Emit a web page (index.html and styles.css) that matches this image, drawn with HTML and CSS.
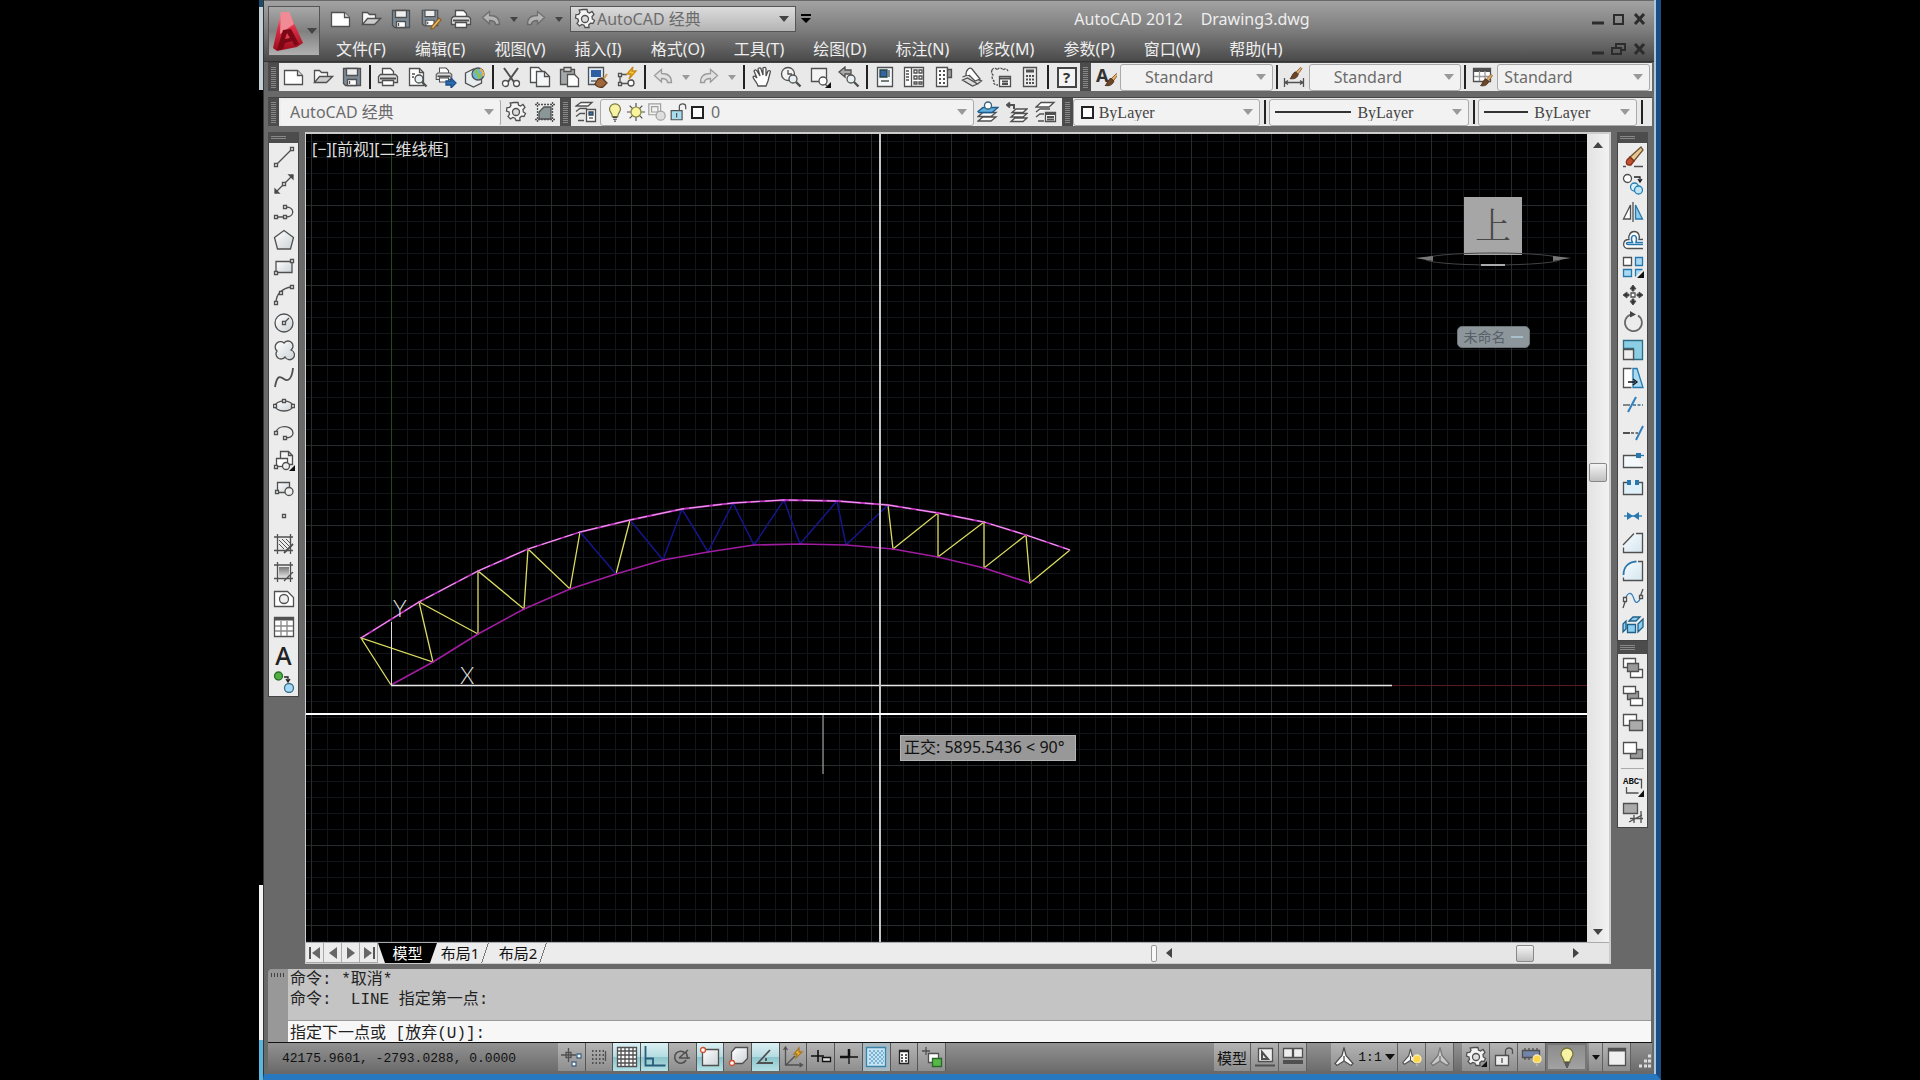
FILE: index.html
```html
<!DOCTYPE html>
<html lang="zh-CN">
<head>
<meta charset="utf-8" />
<title>AutoCAD 2012 Drawing3.dwg</title>
<link rel="stylesheet" href="styles.css">
</head>

<body>
<!-- shared icons -->
<svg class="sprite" width="0" height="0">
	<defs>
		<linearGradient id="gRed" x1="0" y1="0" x2="0" y2="1"><stop offset="0" stop-color="#f4a0a8"/><stop offset=".4" stop-color="#dd3048"/><stop offset="1" stop-color="#9c0c1c"/></linearGradient>
		<linearGradient id="gGray" x1="0" y1="0" x2="0" y2="1"><stop offset="0" stop-color="#777"/><stop offset="1" stop-color="#ddd"/></linearGradient>
		<linearGradient id="gBlue" x1="0" y1="0" x2="1" y2="1"><stop offset="0" stop-color="#f8fbfd"/><stop offset="1" stop-color="#d4e6f0"/></linearGradient>
		<linearGradient id="gLight" x1="0" y1="0" x2="1" y2="1"><stop offset="0" stop-color="#fff"/><stop offset="1" stop-color="#ccd2d6"/></linearGradient>
	</defs>
	<symbol id="new" viewBox="0 0 22 22"><path d="M1.500 4.500h13l5 5v9h-18z" fill="#fff"/><path d="M14.500 4.500v5h5" fill="#ddd"/></symbol>
	<symbol id="open" viewBox="0 0 22 22"><path d="M2.500 16.500v-12h5l2 2h6v4" fill="#f8f8f8"/><path d="M2.500 16.500l5-6h13l-6 6z" fill="#ccc"/></symbol>
	<symbol id="save" viewBox="0 0 22 22"><path d="M2.500 2.500h17v17h-15l-2-2z" fill="#7d8b98"/><path d="M5.500 2.500h11v7h-11z" fill="#eee"/><path d="M6.500 13.500h9v6h-9z" fill="#fff"/><path d="M8.500 15v3"/></symbol>
	<symbol id="print" viewBox="0 0 22 22"><path d="M5.500 8v-5.500h8l3 3v3" fill="#fff"/><path d="M3.500 8.500h15l2 2v6h-19v-6z" fill="#e0e0e0"/><path d="M3 12.500h16" stroke-width="2"/><path d="M5.500 14.500h11v5h-11z" fill="#fff"/></symbol>
	<symbol id="undo" viewBox="0 0 22 22"><path d="M2.500 9.500l7-6v4c7 0 10 3 10 9h-4c0-3-2-4-6-4v3.500z" fill="#ddd"/></symbol>
	<symbol id="redo" viewBox="0 0 22 22"><path d="M19.500 9.500l-7-6v4c-7 0-10 3-10 9h4c0-3 2-4 6-4v3.500z" fill="#ddd"/></symbol>
	<symbol id="gear" viewBox="0 0 22 22"><path d="M9 1.500h4l.5 2.500 2 1 2.500-1.500 2 3-2 2 .3 2.500 2.200 1.500-1.500 3-2.500-.3-1.700 1.600.2 2.700h-4l-1-2.300-2.200-.7-2.300 1.500-2.500-2.500 1.500-2.200-.5-2.300-2.500-1 .5-3.500 2.700-.2 1.300-2-.8-2.300z" fill="#f4f4f4"/><circle cx="11" cy="11" r="3.500" fill="#ddd"/></symbol>
	<symbol id="bulb" viewBox="0 0 22 22"><path d="M11 2a6 6 0 0 0-6 6c0 3 3 4 3 8h6c0-4 3-5 3-8a6 6 0 0 0-6-6z" fill="#f6f4a4" stroke="#77743a"/><path d="M8.500 17h5M9 19h4M10 21h2" stroke="#444"/></symbol>
	<symbol id="brush" viewBox="0 0 22 22"><path d="M18.500 2l2 2-6 8-3-3z" fill="#e0b070" stroke="#8a6030"/><path d="M11 8.500l4 4c-2 6-7 7-12 6 3-2 3-8 8-10z" fill="#6b4526" stroke="#4a2e18"/></symbol>
	<symbol id="lens" viewBox="0 0 22 22"><circle cx="13" cy="13" r="4" fill="#e8f0f4"/><path d="M16 16l4.500 4.500" stroke-width="2.400"/></symbol>
	<symbol id="unlock" viewBox="0 0 22 22"><path d="M12.500 9v-4c0-4 7-4 7 0v3"/><path d="M3.500 9.500h12v10h-12z" fill="#a8dcee"/><path d="M9.500 12v5"/></symbol>
	<symbol id="unlockw" viewBox="0 0 22 22"><path d="M12.500 9v-4c0-4 7-4 7 0v3"/><path d="M2.500 9.500h13v10h-13z" fill="#eee"/><path d="M9 12v5"/></symbol>
	<symbol id="scale" viewBox="0 0 22 22"><path d="M11 1.500l2 8 7 8-2 2-7-4.500-7 4.500-2-2 7-8z" fill="#f8f8f8"/><path d="M11 10v5" /></symbol>
	<symbol id="spark" viewBox="0 0 22 22"><circle cx="16" cy="13" r="4" fill="#ffd54a" stroke="#f4ecb0"/><path d="M14.500 18h3v2h-3z" fill="#fff" stroke="#999"/></symbol>
</svg>

<div class="desktop">
<div class="behind"></div>
<div class="window">

	<header class="titlebar">
		<button class="app" aria-label="应用程序菜单">
			<svg width="34" height="42" viewBox="0 0 34 42"><path d="M10 2h8l14 31-6 4-20 4-4-3z" fill="url(#gRed)"/><path d="M10 2h8l5 12-14 10z" fill="#f08a94"/><path d="M12 20l8-1 8 15-4 2-3-5-7 2-2 6-6 1z" fill="#7c0815"/><path d="M16 23l3 5-5 1z" fill="#e04050"/></svg>
			<i class="arr"></i>
		</button>
		<div class="titlerows">
			<div class="row1">
				<div class="qat">
					<button aria-label="新建"><svg class="ic"><use href="#new"/></svg></button>
					<button aria-label="打开"><svg class="ic"><use href="#open"/></svg></button>
					<button aria-label="保存"><svg class="ic"><use href="#save"/></svg></button>
					<button aria-label="另存为"><svg class="ic" viewBox="0 0 22 22"><use href="#save" width="20" height="20"/><path d="M19 10l2 2-7 8-3 1 1-3z" fill="#f0c060" stroke="#8a6030"/></svg></button>
					<button aria-label="打印"><svg class="ic"><use href="#print"/></svg></button>
					<button aria-label="放弃" class="dim"><svg class="ic"><use href="#undo"/></svg></button>
					<button aria-label="放弃列表" class="narrow"><i class="arr sm"></i></button>
					<button aria-label="重做" class="dim"><svg class="ic"><use href="#redo"/></svg></button>
					<button aria-label="重做列表" class="narrow"><i class="arr sm"></i></button>
				</div>
				<div class="combo space">
					<svg class="ic"><use href="#gear"/></svg>
					<select aria-label="工作空间"><option>AutoCAD 经典</option></select>
					<i class="arr"></i>
				</div>
				<button class="more" aria-label="自定义"><svg width="12" height="10"><path d="M1 0h10v2h-10zM1 4h10l-5 5z"/></svg></button>
				<h1><span>AutoCAD 2012</span><span>Drawing3.dwg</span></h1>
				<div class="winbtns">
					<button aria-label="最小化"><svg width="14" height="14"><path d="M1 11h12" stroke-width="3"/></svg></button>
					<button aria-label="最大化"><svg width="14" height="14"><path d="M2 3h9v9h-9z" stroke-width="2"/></svg></button>
					<button aria-label="关闭"><svg width="14" height="14"><path d="M2 2l9 10M11 2l-9 10" stroke-width="3"/></svg></button>
				</div>
			</div>
			<div class="row2">
				<nav class="menu">
					<a href="#">文件(F)</a>
					<a href="#">编辑(E)</a>
					<a href="#">视图(V)</a>
					<a href="#">插入(I)</a>
					<a href="#">格式(O)</a>
					<a href="#">工具(T)</a>
					<a href="#">绘图(D)</a>
					<a href="#">标注(N)</a>
					<a href="#">修改(M)</a>
					<a href="#">参数(P)</a>
					<a href="#">窗口(W)</a>
					<a href="#">帮助(H)</a>
				</nav>
				<div class="winbtns">
					<button aria-label="最小化图形"><svg width="14" height="14"><path d="M1 11h12" stroke-width="3"/></svg></button>
					<button aria-label="还原图形"><svg width="16" height="14"><path d="M1 6h9v6h-9zM5 6v-4h9v6h-4" stroke-width="2"/></svg></button>
					<button aria-label="关闭图形"><svg width="14" height="14"><path d="M2 2l9 10M11 2l-9 10" stroke-width="3"/></svg></button>
				</div>
			</div>
		</div>
	</header>

	<!-- standard toolbar + styles -->
	<div class="bar">
		<div class="grip"></div>
		<div class="tools">
			<button aria-label="新建"><svg class="ic"><use href="#new"/></svg></button>
			<button aria-label="打开"><svg class="ic"><use href="#open"/></svg></button>
			<button aria-label="保存"><svg class="ic"><use href="#save"/></svg></button>
			<i class="sep"></i>
			<button aria-label="打印"><svg class="ic"><use href="#print"/></svg></button>
			<button aria-label="打印预览"><svg class="ic" viewBox="0 0 22 22"><path d="M3.500 2.500h10l4 4v13h-14z" fill="#fff"/><path d="M13.500 2.500v4h4M6 8h3M6 11h2"/><use href="#lens" width="22" height="22"/></svg></button>
			<button aria-label="发布"><svg class="ic" viewBox="0 0 22 22"><use href="#print" width="18" height="18"/><path d="M11 15h5v-3l5 5-5 5v-3h-5z" fill="#2b6cb0" stroke="#1c4f88"/></svg></button>
			<button aria-label="三维DWF"><svg class="ic" viewBox="0 0 22 22"><path d="M1.500 7l8-4 8 4v10l-8 4-8-4z" fill="#e8edf0"/><circle cx="14" cy="8" r="6" fill="#6fb5e0"/><path d="M12 3c3 1 1 4 4 5s1 4-1 5c-3-2-1-4-3-5s-2-3 0-5z" fill="#8bc34a" stroke="none"/><path d="M16 3c3 2 4 4 3 7" stroke="#f0b040" stroke-width="2"/></svg></button>
			<i class="sep"></i>
			<button aria-label="剪切"><svg class="ic" viewBox="0 0 22 22"><path d="M4 2l10 14M18 2l-10 14" stroke-width="2"/><circle cx="5.500" cy="17.500" r="3" fill="#fff"/><circle cx="16.500" cy="17.500" r="3" fill="#fff"/></svg></button>
			<button aria-label="复制"><svg class="ic" viewBox="0 0 22 22"><path d="M1.500 1.500h8l4 4v11h-12z" fill="#fff"/><path d="M7.500 5.500h8l5 5v10h-13z" fill="#f4f6f8"/><path d="M15.500 5.500v5h5"/></svg></button>
			<button aria-label="粘贴"><svg class="ic" viewBox="0 0 22 22"><path d="M2.500 3.500h14v15h-14z" fill="#a4a8aa"/><path d="M6 1.500h7v4h-7z" fill="#ddd"/><path d="M9.500 8.500h7l4 4v8h-11z" fill="#fff"/></svg></button>
			<button aria-label="特性匹配"><svg class="ic" viewBox="0 0 22 22"><path d="M1.500 1.500h15v17h-15z" fill="#dfe9f2"/><path d="M4 4h10v7h-10z" fill="#2e5fa0" stroke="none"/><path d="M4 15h5"/><path d="M20 8l-4 6" stroke="#d0a050" stroke-width="2"/><path d="M11 13l4-1 5 5-4 4c-4 1-7-1-8-3z" fill="#a0683a" stroke="#5a3820"/></svg></button>
			<button aria-label="块编辑器"><svg class="ic" viewBox="0 0 22 22"><path d="M11 8.500h-7v9h12v-4"/><path d="M2.500 7.500h3v3h-3zM2.500 16.500h3v3h-3z" fill="#fff"/><circle cx="15" cy="17" r="3" fill="#fff"/><path d="M17 1l-6 7h4l-2 5 7-8h-4z" fill="#ffc52e" stroke="#c88a18"/></svg></button>
			<i class="sep"></i>
			<button aria-label="放弃" class="dim"><svg class="ic"><use href="#undo"/></svg></button>
			<button aria-label="放弃列表" class="narrow"><i class="arr sm pale"></i></button>
			<button aria-label="重做" class="dim"><svg class="ic"><use href="#redo"/></svg></button>
			<button aria-label="重做列表" class="narrow"><i class="arr sm pale"></i></button>
			<i class="sep"></i>
			<button aria-label="实时平移"><svg class="ic" viewBox="0 0 22 22"><path d="M7 20c-1-4-5-7-5-9 1-2 3 0 4 1l-3-7c1-2 2-1 3 0l3 5-2-7c1-2 3-1 3 0l2 6v-7c1-1 3-1 3 1v7l2-5c2-1 3 0 2 2l-2 8-2 5z" fill="#fff"/></svg></button>
			<button aria-label="实时缩放"><svg class="ic" viewBox="0 0 22 22"><circle cx="8" cy="8" r="6.500" fill="#f4f4f4"/><path d="M8 4v4h4"/><use href="#lens" width="22" height="22"/></svg></button>
			<button aria-label="窗口缩放"><svg class="ic" viewBox="0 0 22 22"><path d="M2.500 2.500h15v13h-15z" fill="#f4f4f4"/><circle cx="14" cy="15" r="4" fill="#fff"/><path d="M16 18l2 2"/><path d="M22 16v6h-6z" fill="#111" stroke="none"/></svg></button>
			<button aria-label="缩放上一个"><svg class="ic" viewBox="0 0 22 22"><path d="M1 6l6-5v3h6v4h-6v3z" fill="#aaa"/><use href="#lens" width="22" height="22"/></svg></button>
			<i class="sep"></i>
			<button aria-label="特性"><svg class="ic" viewBox="0 0 22 22"><path d="M3.500 1.500h15v19h-15z" fill="#f4f8fb"/><path d="M6 4h7v7h-7z" fill="#3565a0" stroke="#244"/><path d="M15 4v7M7 15h8" /></svg></button>
			<button aria-label="设计中心"><svg class="ic" viewBox="0 0 22 22"><path d="M1.500 1.500h19v19h-19zM8.500 2v18" fill="#fff"/><path d="M3 5h3M3 8h3M3 11h3M3 14h3M11 4h3v3h-3zM16 4h3v3h-3zM11 10h3v3h-3zM16 10h3v3h-3zM11 16h3v2h-3zM16 16h3v2h-3z"/></svg></button>
			<button aria-label="工具选项板"><svg class="ic" viewBox="0 0 22 22"><path d="M4.500 1.500h11v19h-11z" fill="#fff"/><path d="M15.500 3.500h4v8h-4z" fill="#999"/><path d="M7 5h2M11 5h2M7 9h2M11 9h2M7 13h2M11 13h2M7 17h2M11 17h2" stroke-width="2"/></svg></button>
			<button aria-label="图纸集"><svg class="ic" viewBox="0 0 22 22"><path d="M1.500 14l5-2 10 6-5 2zM1.500 11l5-2 14 6-4 3" fill="#ddd"/><path d="M5 9c0-6 4-8 6-6l8 10-5 2-6-6" fill="#fff"/></svg></button>
			<button aria-label="标记集"><svg class="ic" viewBox="0 0 22 22"><path d="M2 4c2-3 4-2 5 0 2-3 5-2 6 0 2-2 5-1 5 2M2 4c-1 3 0 4 1 5-2 3 0 5 1 6-1 3 1 4 4 4" stroke-dasharray="2.500 1"/><path d="M9.500 10.500h11v10h-11z" fill="#fff"/><path d="M10 12.500h10M12 15.500h6M12 18h6" stroke-width="2"/></svg></button>
			<button aria-label="计算器"><svg class="ic" viewBox="0 0 22 22"><path d="M4.500 1.500h13v19h-13z" fill="#eee"/><path d="M7 5h8" stroke-width="3"/><path d="M7 10h2M10 10h2M13 10h2M7 13.500h2M10 13.500h2M13 13.500h2M7 17h2M10 17h2M13 17h2" stroke-width="2"/></svg></button>
			<i class="sep"></i>
			<button aria-label="帮助" class="help"><span>?</span></button>
		</div>
		<div class="grip"></div>
		<div class="tools fill">
			<button aria-label="文字样式"><svg class="ic" viewBox="0 0 22 22"><text x="1" y="16" class="ta">A</text><use href="#brush" x="8" y="6" width="16" height="16"/></svg></button>
			<div class="combo"><select class="mid" aria-label="文字样式"><option>Standard</option></select><i class="arr pale"></i></div>
			<i class="sep"></i>
			<button aria-label="标注样式"><svg class="ic" viewBox="0 0 22 22"><path d="M1.500 12v9M20.500 12v9M2 16.500h18M5 14.500l-3 2 3 2M17 14.500l3 2-3 2"/><use href="#brush" x="4" y="0" width="17" height="15"/></svg></button>
			<div class="combo"><select class="mid" aria-label="标注样式"><option>Standard</option></select><i class="arr pale"></i></div>
			<i class="sep"></i>
			<button aria-label="表格样式"><svg class="ic" viewBox="0 0 22 22"><path d="M1.500 2.500h17v13h-17z" fill="#fff"/><path d="M2 4.500h16" stroke-width="3"/><path d="M2 10.500h16M7.500 5v10M13 5v10" stroke="#999"/><use href="#brush" x="6" y="7" width="16" height="15"/></svg></button>
			<div class="combo"><select aria-label="表格样式"><option>Standard</option></select><i class="arr pale"></i></div>
		</div>
	</div>

	<!-- workspace, layers, properties -->
	<div class="bar second">
		<div class="grip"></div>
		<div class="tools">
			<div class="combo ws"><select aria-label="工作空间"><option>AutoCAD 经典</option></select><i class="arr pale"></i></div>
			<button aria-label="工作空间设置"><svg class="ic"><use href="#gear"/></svg></button>
			<button aria-label="我的工作空间"><svg class="ic" viewBox="0 0 22 22"><path d="M1 3.500h20M1 18.500h20M3.500 1v20M18.500 1v20" stroke-dasharray="2 1"/><path d="M5 11l5-5h7v12h-12z" fill="#8b9696"/></svg></button>
		</div>
		<div class="grip"></div>
		<div class="tools layers">
			<button aria-label="图层特性"><svg class="ic" viewBox="0 0 22 22"><path d="M1 5l5-3.500h11l-4 3.500zM1 10.500l4-3h7M1 15.500l4-3h5M3 19.500h6" fill="#fff"/><path d="M11.500 8.500h9v12h-9z" fill="#fff"/><path d="M14 11h4v3h-4z" fill="#3a78b8" stroke="#345"/><path d="M14 17h4"/></svg></button>
			<div class="combo grow">
				<svg class="ic s18"><use href="#bulb"/></svg>
				<svg class="ic s18" viewBox="0 0 22 22"><path d="M11 1v20M1 11h20M4 4l14 14M18 4l-14 14"/><circle cx="11" cy="11" r="5.500" fill="#f8f4a0" stroke="#88843a"/></svg>
				<svg class="ic s18 faint" viewBox="0 0 22 22"><path d="M2 2h13v12h-13zM5 5h7v6h-7z"/><circle cx="15" cy="15" r="5" fill="#ccc"/></svg>
				<svg class="ic s18"><use href="#unlock"/></svg>
				<i class="swatch"></i>
				<select aria-label="图层"><option>0</option></select><i class="arr pale"></i>
			</div>
			<button aria-label="置为当前图层"><svg class="ic" viewBox="0 0 22 22"><path d="M1 20l5-4h13l-5 4zM1 15.500l5-4h13l-5 4z" fill="#fff"/><path d="M1 10.500l5-4h15l-6 5h-13z" fill="#62b0e0" stroke="#1c5c8c"/><circle cx="11" cy="4.500" r="3.500" fill="#fff" stroke="#36627c"/></svg></button>
			<button aria-label="上一个图层"><svg class="ic" viewBox="0 0 22 22"><path d="M5 20.500l4-3.500h12l-4 3.500zM5 16l4-3.500h12l-4 3.500zM6 11.500l4-3.500h11l-4 3.500z" fill="#fff"/><path d="M1 4h7v4M4 1.500l-3 2.500 3 2.500" stroke-width="2"/></svg></button>
			<button aria-label="图层状态"><svg class="ic" viewBox="0 0 22 22"><path d="M1 6l5-4.500h13l-5 4.500zM1 11l4-3h10M1 16l4-3h4M3 20h6" fill="#fff"/><path d="M10.500 11.500h10v9h-10z" fill="#fff"/><path d="M11 13h9M12 16h7M12 18.500h7" stroke-width="2"/></svg></button>
		</div>
		<div class="grip"></div>
		<div class="tools props">
			<div class="combo c1"><i class="swatch"></i><select aria-label="颜色"><option>ByLayer</option></select><i class="arr pale"></i></div>
			<i class="sep"></i>
			<div class="combo c2"><i class="line"></i><select aria-label="线型"><option>ByLayer</option></select><i class="arr pale"></i></div>
			<i class="sep"></i>
			<div class="combo c3"><i class="line short"></i><select aria-label="线宽"><option>ByLayer</option></select><i class="arr pale"></i></div>
			<i class="sep"></i>
		</div>
	</div>

	<main class="work">
		<!-- draw toolbar -->
		<div class="side">
			<div class="grip h"></div>
			<div class="vtools draw">
				<button aria-label="直线"><svg class="ic" viewBox="0 0 22 22"><path d="M3 19l16-16"/><path d="M1.500 17.500h3v3h-3zM17.500 1.500h3v3h-3z" fill="#fff"/></svg></button>
				<button aria-label="构造线"><svg class="ic" viewBox="0 0 22 22"><path d="M2 20l18-18"/><path d="M2 16v4h4zM20 6v-4h-4z" fill="#333"/><path d="M9.500 9.500h3v3h-3z" fill="#fff"/></svg></button>
				<button aria-label="多段线"><svg class="ic" viewBox="0 0 22 22"><path d="M3 16h10c9 0 9-10 0-10"/><path d="M1.500 14.500h3v3h-3zM10.500 14.500h3v3h-3zM10.500 4.500h3v3h-3z" fill="#fff"/></svg></button>
				<button aria-label="正多边形"><svg class="ic" viewBox="0 0 22 22"><path d="M11 1.500l9.500 7-3 11.500h-13l-3-11.500z" fill="url(#gLight)"/></svg></button>
				<button aria-label="矩形"><svg class="ic" viewBox="0 0 22 22"><path d="M3 5.500h16v11h-16z" fill="url(#gLight)"/><path d="M1.500 15.500h3v3h-3zM17.500 3.500h3v3h-3z" fill="#fff"/></svg></button>
				<button aria-label="圆弧"><svg class="ic" viewBox="0 0 22 22"><path d="M3 19c0-9 6-15 16-16"/><path d="M1.500 17.500h3v3h-3zM6.500 7.500h3v3h-3zM17.500 1.500h3v3h-3z" fill="#fff"/></svg></button>
				<button aria-label="圆"><svg class="ic" viewBox="0 0 22 22"><circle cx="11" cy="11" r="9" fill="url(#gLight)"/><path d="M11 11l5-5"/><path d="M9.500 9.500h3v3h-3z" fill="#fff"/></svg></button>
				<button aria-label="修订云线"><svg class="ic" viewBox="0 0 22 22"><path d="M11 4a5 5 0 1 1 7 7a5 5 0 1 1-6 7a5 5 0 0 1-8-6a5 5 0 1 1 7-8z" fill="url(#gLight)"/></svg></button>
				<button aria-label="样条曲线"><svg class="ic" viewBox="0 0 22 22"><path d="M2 20c2-12 5-11 9-8s8 0 9-11" stroke-width="1.800"/></svg></button>
				<button aria-label="椭圆"><svg class="ic" viewBox="0 0 22 22"><ellipse cx="11" cy="11" rx="9" ry="5" fill="url(#gLight)"/><path d="M.5 9.500h3v3h-3zM18.500 9.500h3v3h-3zM9.500 4.500h3v3h-3z" fill="#fff"/></svg></button>
				<button aria-label="椭圆弧"><svg class="ic" viewBox="0 0 22 22"><path d="M3 11c1-9 17-8 17 0 0 4-4 5-8 5"/><path d="M1.500 9.500h3v3h-3zM10.500 14.500h3v3h-3z" fill="#fff"/></svg></button>
				<button aria-label="插入块"><svg class="ic" viewBox="0 0 22 22"><path d="M7.500 8v-6.500h8l4 4v9h-4M15.500 1.500v4h4" fill="#f4f4f4"/><path d="M3.500 16v-7.500h11v6" fill="#fff"/><path d="M3 16.500h8"/><circle cx="13" cy="16" r="3.500" fill="#eee"/><path d="M1.500 15.500h3v3h-3z" fill="#fff"/><path d="M22 15v6h-6z" fill="#111" stroke="none"/></svg></button>
				<button aria-label="创建块"><svg class="ic" viewBox="0 0 22 22"><path d="M4.500 4.500h12v10h-12z" fill="url(#gLight)"/><path d="M2.500 12.500h3v3h-3z" fill="#fff"/><circle cx="16" cy="13.500" r="4" fill="#eee"/></svg></button>
				<button aria-label="点"><svg class="ic" viewBox="0 0 22 22"><path d="M9.500 9.500h3v3h-3z" fill="#fff"/></svg></button>
				<button aria-label="图案填充"><svg class="ic" viewBox="0 0 22 22"><path d="M1 4h19M1 17.500h19M4.500 1v20M17.500 1v20"/><path d="M6 11l5 5M6 7l9 9M9 6l8 8M13 6l4 4" stroke-width="1"/><path d="M11 20l9-9" stroke-width="1.800"/></svg></button>
				<button aria-label="渐变色"><svg class="ic" viewBox="0 0 22 22"><path d="M6 6h10v10h-10z" fill="url(#gGray)" stroke="none"/><path d="M1 4h19M1 17.500h19M4.500 1v20M17.500 1v20M11 20l9-9"/></svg></button>
				<button aria-label="面域"><svg class="ic" viewBox="0 0 22 22"><path d="M1.500 3.500h13l6 6v9h-19z" fill="#fff"/><circle cx="11" cy="11" r="4.500" fill="#eee"/></svg></button>
				<button aria-label="表格"><svg class="ic" viewBox="0 0 22 22"><path d="M1.500 1.500h19v19h-19z" fill="#fff"/><path d="M2 3h18" stroke-width="3"/><path d="M2 10h18M2 15h18M8 5v15M14 5v15" stroke="#888"/></svg></button>
				<button aria-label="多行文字" class="letter">A</button>
				<button aria-label="添加选定对象"><svg class="ic" viewBox="0 0 22 22"><circle cx="5.500" cy="5" r="4" fill="#52b043" stroke="#2a702a"/><circle cx="16" cy="17" r="4.500" fill="#a4d8f4" stroke="#38708c"/><path d="M11 6h4v4M13 8l2 3 2-3" stroke="#222"/></svg></button>
			</div>
		</div>

		<div class="doc">
			<div class="view">
				<div class="canvas">
					<svg class="drawing" width="100%" height="100%">
						<defs>
							<pattern id="minor" width="16" height="16" patternUnits="userSpaceOnUse" x="5" y="7"><path d="M.5 0v16M0 .5h16" stroke="#0f1519"/></pattern>
							<pattern id="major" width="80" height="80" patternUnits="userSpaceOnUse" x="5" y="71"><path d="M.5 0v80M0 .5h80" stroke="#272d2d"/></pattern>
						</defs>
						<rect width="100%" height="100%" fill="url(#minor)"/>
						<rect width="100%" height="100%" fill="url(#major)"/>
						<g transform="translate(-306 -134)" fill="none">
							<path d="M391.500 134v488" stroke="#1d4a20"/>
							<path d="M1392 685.500h1200" stroke="#5a1820"/>
							<!-- web members -->
							<path class="web" d="M391 685L361 638L433 662L419 602L478 634L478 571L524 609L528 549L570 589L580 532M616 574L630 520M888 505L893 549L938 513L938 557L984 522L984 568L1026 535L1030 583L1070 550"/>
							<path class="webblue" d="M580 532L616 574M630 520L663 560L682 509L708 552L733 503L754 545L784 500L800 544L837 501L846 545L888 505"/>
							<!-- chords -->
							<path class="chord low" d="M391 685L433 662L478 634L524 609L570 589L616 574L663 560L708 552L754 545L800 544L846 545L893 549L938 557L984 568L1030 583"/>
							<path class="chord" d="M361 638L419 602L478 571L528 549L580 532L630 520L682 509L733 503L784 500L837 501L888 505L938 513L984 522L1026 535L1070 550"/>
							<path class="hi" d="M361 638L419 602L478 571L528 549L580 532L630 520L682 509L733 503L784 500L837 501L888 505L938 513L984 522L1026 535L1070 550"/>
							<path d="M391.500 622v63" stroke="#ddd"/>
							<path d="M391 685.500h1001" stroke="#e8e8e8" stroke-width="1.500"/>
							<text x="393" y="617">Y</text>
							<text x="460" y="684">X</text>
							<path d="M823 715v59" stroke="#bbb"/>
							<!-- crosshair -->
							<path d="M880 0v2000" stroke="#c4c4c4" stroke-width="2"/>
							<path d="M0 714h3000" stroke="#fff" stroke-width="2"/>
						</g>
					</svg>
					<div class="viewlabel">[−][前视][二维线框]</div>
					<div class="cube">
						<b>上</b>
						<svg width="160" height="22" viewBox="0 0 160 22"><ellipse cx="80" cy="10" rx="68" ry="6" fill="none" stroke="#444"/><path d="M2 9l18-2v5zM158 9l-18-2v5z" fill="#777"/><path d="M68 16h24" stroke="#aaa" stroke-width="2"/></svg>
						<button>未命名 <i></i></button>
					</div>
					<div class="tip">正交: 5895.5436 &lt; 90°</div>
				</div>
				<div class="vscroll"><i class="arr up"></i><span class="thumb"></span><i class="arr"></i></div>
			</div>
			<div class="tabs">
				<div class="nav">
					<button aria-label="第一个"><svg width="16" height="14"><path d="M3 1v12" stroke="#555" stroke-width="2"/><path d="M13 1v12l-8-6z"/></svg></button>
					<button aria-label="上一个"><svg width="12" height="14"><path d="M10 1v12l-8-6z"/></svg></button>
					<button aria-label="下一个"><svg width="12" height="14"><path d="M2 1v12l8-6z"/></svg></button>
					<button aria-label="最后一个"><svg width="16" height="14"><path d="M13 1v12" stroke="#555" stroke-width="2"/><path d="M3 1v12l8-6z"/></svg></button>
				</div>
				<button class="tab on">模型</button>
				<button class="tab">布局1</button>
				<button class="tab">布局2</button>
				<div class="hscroll"><i class="split"></i><i class="arr left"></i><span class="thumb"></span><i class="arr right"></i></div>
			</div>
		</div>

		<!-- modify toolbar -->
		<div class="side">
			<div class="grip h"></div>
			<div class="vtools modify">
				<button aria-label="删除"><svg class="ic" viewBox="0 0 22 22"><path d="M19 1l2 3-9 11-4-4z" fill="#e8c890" stroke="#6a5030"/><path d="M8 11l4 4-3 4c-4 1-6-2-4-5z" fill="#c05030" stroke="#803018"/><path d="M1 20.500h3M12 20.500h9"/></svg></button>
				<button aria-label="复制"><svg class="ic" viewBox="0 0 22 22"><circle cx="5.500" cy="5.500" r="4" fill="#fff"/><circle cx="12.500" cy="14" r="4" fill="#d8f0fa" stroke="#2880b0"/><circle cx="16.500" cy="17" r="4" fill="#bfe4f6" stroke="#2880b0"/><path d="M12 4h6v4M16 6l2 3 2-3" stroke="#222"/></svg></button>
				<button aria-label="镜像"><svg class="ic" viewBox="0 0 22 22"><path d="M11 1v20"/><path d="M8.500 4v14h-7z" fill="#fff"/><path d="M13.500 4v14h7z" fill="#8fcbea" stroke="#2878a8"/></svg></button>
				<button aria-label="偏移"><svg class="ic" viewBox="0 0 22 22"><path d="M21 19.500h-15c-6 0-6-9 1-9-1-3 1-8 5-8 5 0 6 5 5 8h4" fill="#fff"/><path d="M21 15.500h-15c-2 0-2-2 0-2h4.500c-2-4-1-7 1.500-7s3 3 2 7h7" stroke="#2878b0" stroke-width="1.600"/></svg></button>
				<button aria-label="阵列"><svg class="ic" viewBox="0 0 22 22"><path d="M1.500 1.500h8v8h-8z" fill="#fff"/><path d="M13.500 1.500h7v8h-7zM1.500 13.500h8v7h-8zM13.500 20.500v-7h7" fill="#a9d8f2" stroke="#2878b0"/><path d="M22 15v7h-7z" fill="#111" stroke="none"/></svg></button>
				<button aria-label="移动"><svg class="ic" viewBox="0 0 22 22"><path d="M9 9h4v4h-4z" fill="#fff"/><path d="M11 1l3 4h-2v2h-2v-2h-2zM11 21l3-4h-2v-2h-2v2h-2zM1 11l4-3v2h2v2h-2v2zM21 11l-4-3v2h-2v2h2v2z" fill="#333" stroke-width="1"/></svg></button>
				<button aria-label="旋转"><svg class="ic" viewBox="0 0 22 22"><path d="M9 3.500a8.500 8.500 0 1 0 7 1" stroke="#666" stroke-width="1.700"/><path d="M8 0l6 3.500-6 3z" fill="#444" stroke="none"/></svg></button>
				<button aria-label="缩放"><svg class="ic" viewBox="0 0 22 22"><path d="M1.500 1.500h19v19h-9v-11h-10z" fill="#8ccfe4" stroke="#2c6c84"/><path d="M1.500 10.500h10v10h-10z" fill="#eee"/></svg></button>
				<button aria-label="拉伸"><svg class="ic" viewBox="0 0 22 22"><path d="M9.500 1.500h-8v19h8" fill="#fff"/><path d="M11 1.500h4l6 19h-10z" fill="#a9daf0" stroke="#2878b0"/><path d="M6 15h7M11 12l4 3-4 3" stroke="#111"/></svg></button>
				<button aria-label="修剪"><svg class="ic" viewBox="0 0 22 22"><path d="M1 11h7"/><path d="M11 11h10" stroke="#3a7090" stroke-dasharray="3 1.500"/><path d="M6 18l8-15" stroke="#3280c0" stroke-width="2"/></svg></button>
				<button aria-label="延伸"><svg class="ic" viewBox="0 0 22 22"><path d="M1 11h7" stroke-width="2"/><path d="M9 11h7" stroke-dasharray="3 1.500"/><path d="M14 18l7-14" stroke="#3280c0" stroke-width="2"/></svg></button>
				<button aria-label="打断于点"><svg class="ic" viewBox="0 0 22 22"><path d="M15 5.500h-13.500v12h19.500" fill="#f4fafc"/><path d="M14 3h5v5h-5z" fill="#2878b0" stroke="none"/><path d="M19 5.500h3" stroke="#2878b0"/></svg></button>
				<button aria-label="打断"><svg class="ic" viewBox="0 0 22 22"><path d="M5 5.500h-3.500v12h19v-12h-4" fill="#e0f0f8"/><path d="M5 3h4v5h-4zM13 3h4v5h-4z" fill="#2878b0" stroke="none"/></svg></button>
				<button aria-label="合并"><svg class="ic" viewBox="0 0 22 22"><path d="M2 11h18" stroke="#2878b0"/><path d="M5 7l6 4-6 4zM17 7l-6 4 6 4z" fill="#2878b0" stroke="none"/></svg></button>
				<button aria-label="倒角"><svg class="ic" viewBox="0 0 22 22"><path d="M13 1.500h7.500v19h-19v-7l11-12z" fill="url(#gBlue)" stroke="none"/><path d="M14 1.500h6.500v19h-19v-5M1 13l11-11.500"/></svg></button>
				<button aria-label="圆角"><svg class="ic" viewBox="0 0 22 22"><path d="M1.500 15c0-8 5-13 13-13.500h6v19h-19z" fill="url(#gBlue)" stroke="none"/><path d="M16 1.500h4.500v19h-19v-3"/><path d="M1.500 15c0-8 5-13 13-13.500" stroke="#2878b0" stroke-width="1.800"/></svg></button>
				<button aria-label="光顺曲线"><svg class="ic" viewBox="0 0 22 22"><path d="M1 20l3-9M18 9l3-8"/><path d="M3 11c4-9 7-6 9 0s5 3 7-2" stroke="#3280c0"/><path d="M1.500 9.500h3v4h-3zM17.500 7.500h3v3h-3z" fill="#fff"/></svg></button>
				<button aria-label="分解"><svg class="ic" viewBox="0 0 22 22"><path d="M5.500 9.500h8v8h-8zM7 6l4-4h7l-4 4zM1 9l3-3v8l-3 3zM16 9l5-5v8l-5 5z" fill="#8ccdf0" stroke="#205f88"/></svg></button>
			</div>
			<div class="grip h"></div>
			<div class="vtools order">
				<button aria-label="前置"><svg class="ic" viewBox="0 0 22 22"><path d="M1.500 1.500h12v9h-12zM8.500 12.500h12v8h-12z" fill="#fff"/><path d="M5.500 6.500h11v8h-11z" fill="#999"/></svg></button>
				<button aria-label="后置"><svg class="ic" viewBox="0 0 22 22"><path d="M5.500 6.500h11v8h-11z" fill="#999"/><path d="M1.500 1.500h12v7h-12zM8.500 13.500h12v7h-12z" fill="#fff"/></svg></button>
				<button aria-label="置于对象之上"><svg class="ic" viewBox="0 0 22 22"><path d="M1.500 2.500h13v11h-13z" fill="#fff"/><path d="M7.500 8.500h13v10h-13z" fill="#aaa"/></svg></button>
				<button aria-label="置于对象之下"><svg class="ic" viewBox="0 0 22 22"><path d="M8.500 9.500h12v9h-12z" fill="#999"/><path d="M1.500 2.500h13v11h-13z" fill="#fff"/></svg></button>
				<hr>
				<button aria-label="注释前置"><svg class="ic" viewBox="0 0 22 22"><text x="1" y="9" class="abc">ABC</text><path d="M4.500 12v6h12M17 4.500h2.500v9"/><path d="M22 15v7h-6z" fill="#111" stroke="none"/></svg></button>
				<button aria-label="图案填充后置"><svg class="ic" viewBox="0 0 22 22"><path d="M1.500 1.500h14v10h-14z" fill="#aaa"/><path d="M8 16.500h13M12 13v8M19 9v12M7 20l13-7"/></svg></button>
			</div>
		</div>
	</main>

	<!-- command line -->
	<section class="command">
		<div class="cgrip"></div>
		<div class="cbody">
			<pre>命令: *取消*
命令:  LINE 指定第一点:</pre>
			<div class="prompt"><label for="cmd">指定下一点或 [放弃(U)]:</label><input id="cmd" type="text"></div>
		</div>
	</section>

	<footer class="status">
		<span class="coords">42175.9601, -2793.0288, 0.0000</span>
		<div class="toggles">
			<button aria-label="推断约束"><svg class="ic" viewBox="0 0 22 22"><path d="M1 9h15M8.500 2v14M6 6.500h5v5h-5z"/><path d="M17 8h4v4h-4zM12 16h4v4h-4z" fill="#fff" stroke="#466a88"/></svg></button>
			<button aria-label="捕捉模式"><svg class="ic" viewBox="0 0 22 22"><path d="M4 5h12M4 9h12M4 13h12M4 17h14" stroke-dasharray="1.500 2" stroke-width="2"/><path d="M17.500 5v10"/></svg></button>
			<button class="on" aria-label="栅格显示"><svg class="ic" viewBox="0 0 22 22"><path d="M1.500 1.500h19v19h-19z" fill="#fff"/><path d="M1 5h20M1 9h20M1 13h20M1 17h20M5 1v20M9 1v20M13 1v20M17 1v20"/></svg></button>
			<button class="on" aria-label="正交模式"><svg class="ic" viewBox="0 0 22 22"><path d="M1.500 0v19.500h20M2 12.500h7v7" stroke="#285c78" stroke-width="1.800"/></svg></button>
			<button aria-label="极轴追踪"><svg class="ic" viewBox="0 0 22 22"><path d="M14 7a6 6 0 1 0 1 7M8 12l9-8M8 12h11M15 6l2 7" stroke-width="1.600"/></svg></button>
			<button class="on" aria-label="对象捕捉"><svg class="ic" viewBox="0 0 22 22"><path d="M3.500 3.500h16v16h-16z" fill="url(#gLight)"/><circle cx="4" cy="4" r="2.500" fill="#fff" stroke="#d05030"/></svg></button>
			<button aria-label="三维对象捕捉"><svg class="ic" viewBox="0 0 22 22"><path d="M4.500 6l4-4.500h12v11l-5 5h-11z" fill="url(#gLight)"/><circle cx="5" cy="17" r="2.500" fill="#fff" stroke="#d05030"/></svg></button>
			<button class="on" aria-label="对象捕捉追踪"><svg class="ic" viewBox="0 0 22 22"><path d="M16 4l-12 13h15M12 12v3" stroke-width="1.800"/></svg></button>
			<button aria-label="动态UCS"><svg class="ic" viewBox="0 0 22 22"><path d="M3.500 1v18h17M1.500 4l2-3 2 3M17.500 17l3 2-3 2M4 19l9-9"/><path d="M17 2l-5 6h3l-1 4 6-6h-3z" fill="#f8b830" stroke="#a87820"/></svg></button>
			<button aria-label="动态输入"><svg class="ic" viewBox="0 0 22 22"><path d="M1 10h13M8 4v12" stroke="#111" stroke-width="1.600"/><path d="M12.500 11.500h8v4h-8z" fill="#ddd" stroke="#111"/></svg></button>
			<button aria-label="线宽"><svg class="ic" viewBox="0 0 22 22"><path d="M11 3v8M2 11h9" stroke="#111" stroke-width="2.500"/><path d="M11 11v7M11 11h9" stroke="#111"/></svg></button>
			<button class="half" aria-label="透明度"><svg class="ic" viewBox="0 0 22 22"><path d="M1.500 1.500h19v19h-19z" fill="#c8e4f2" stroke="#3a84ac"/><path d="M4 5h15M4 9h15M4 13h15M4 17h15" stroke="#7ab4d4" stroke-width="2" stroke-dasharray="2 2"/><path d="M6 7h13M6 11h13M6 15h13" stroke="#7ab4d4" stroke-width="2" stroke-dasharray="2 2"/></svg></button>
			<button aria-label="快捷特性"><svg class="ic" viewBox="0 0 22 22"><path d="M6.500 4.500h9v13h-9z" fill="#fff" stroke="#222"/><path d="M6 5.500h10M8 9h2M12 9h2M8 12h2M12 12h2M8 15h2M12 15h2" stroke="#222" stroke-width="1.500"/></svg></button>
			<button aria-label="选择循环"><svg class="ic" viewBox="0 0 22 22"><path d="M1 5h8M5 1v8"/><path d="M7.500 7.500h10v9h-10z" fill="#fff"/><path d="M11.500 12.500h9v8h-9z" fill="#58b848" stroke="#286828"/></svg></button>
		</div>
		<div class="rest">
			<button class="model">模型</button>
			<button aria-label="布局"><svg class="ic" viewBox="0 0 22 22"><path d="M4.500 2.500h14v13h-14z" fill="#eee"/><path d="M8 6v7h6zM1 19.500h20" stroke-width="2"/></svg></button>
			<button aria-label="快速查看布局"><svg class="ic" viewBox="0 0 22 22"><path d="M1.500 2.500h9v9h-9zM11.500 2.500h9v9h-9z" fill="#eee"/><path d="M1 16h20" stroke-width="4"/></svg></button>
			<button class="anno gapl"><svg class="ic"><use href="#scale"/></svg>1:1<i class="arr blk"></i></button>
			<button aria-label="注释可见性"><svg class="ic" viewBox="0 0 22 22"><use href="#scale" width="19" height="22"/><use href="#spark" width="22" height="22"/></svg></button>
			<button class="dim" aria-label="自动缩放"><svg class="ic"><use href="#scale"/></svg></button>
			<button class="gaps" aria-label="切换工作空间"><svg class="ic" viewBox="0 0 22 22"><use href="#gear" width="22" height="22"/><path d="M22 15v6h-6z" fill="#111" stroke="none"/></svg></button>
			<button aria-label="锁定"><svg class="ic"><use href="#unlockw"/></svg></button>
			<button aria-label="硬件加速"><svg class="ic" viewBox="0 0 22 22"><path d="M1.500 4.500h17v7h-17z" fill="#7484a8"/><path d="M4 2v2M8 2v2M12 2v2M16 2v2M4 12v2M8 12v2M12 12v2" /><use href="#spark" width="22" height="22"/></svg></button>
			<button class="iso" aria-label="隔离对象"><svg class="ic"><use href="#bulb"/></svg></button>
			<button class="small" aria-label="状态栏菜单"><i class="arr blk sm"></i></button>
			<button aria-label="全屏显示"><svg class="ic" viewBox="0 0 22 22"><path d="M2.500 2.500h17v17h-17z" fill="#f0f0f0"/><path d="M3 4h16" stroke-width="3"/></svg></button>
			<svg class="size" width="16" height="16"><path d="M12 3h3M8 8h3M12 8h3M3 13h3M8 13h3M12 13h3" stroke="#ddd" stroke-width="3"/></svg>
		</div>
	</footer>
</div>
</div>
</body>
</html>
```

FILE: styles.css
```css
*{ margin:0; padding:0; box-sizing:border-box;}
body{ background:#000; font-family:"Noto Sans","Noto Sans CJK SC",sans-serif; font-size:15px; color:#222; overflow:hidden;}
button{ border:0; background:none; font:inherit; color:inherit; display:flex; align-items:center; justify-content:center;}
a{ color:inherit; text-decoration:none;}
i{ font-style:normal;}
.sprite{ position:absolute;}

.desktop{ display:flex; height:100vh; padding:0 259px;}
.behind{ width:4px; background:linear-gradient(#1c4a68 0 7px,#c4d0d6 7px 90px,#000 90px 885px,#f4f4f4 885px 1040px,#58b8e0 1040px);}
.window{ flex:1; min-width:0; display:flex; flex-direction:column; background:#696969; border-right:5px solid #1c4c84; border-bottom:6px solid #2878c0; border-left:1px solid #333; box-shadow:inset -2px 0 #a8c8e0; padding:1px 8px 3px 4px;}

/* icons */
.ic{ width:22px; height:22px; flex:none; fill:none; stroke:#505050; stroke-width:1.3;}
.s18{ width:20px; height:20px;}
.dim .ic, .faint{ opacity:.5;}
.ta{ font:bold 18px "Noto Sans",sans-serif; fill:#333; stroke:none;}
.abc{ font:bold 9px "Liberation Mono",monospace; fill:#111; stroke:none;}
.arr{ flex:none; width:0; height:0; border:5px solid transparent; border-top:6px solid #444; border-bottom:0;}
.arr.sm{ border-width:5px 4px 0;}
.arr.pale{ border-top-color:#999;}
.arr.blk{ border-top-color:#111;}
.arr.up{ border-top:0; border-bottom:6px solid #444;}
.arr.left{ border:5px solid transparent; border-right:6px solid #444; border-left:0;}
.arr.right{ border:5px solid transparent; border-left:6px solid #444; border-right:0;}

/* title */
.titlebar{ display:flex; height:61px; flex:none; margin:0 -6px 0 -4px; padding:5px 4px 0; background:linear-gradient(#a2a2a2,#7c7c7c 50%,#4a4a4a); border-bottom:1px solid #333;}
.app{ width:52px; height:50px; flex:none; gap:2px; border:1px solid #555; background:linear-gradient(#a8a8a8,#808080 50%,#b0b0b0);}
.titlerows{ flex:1; min-width:0;}
.row1, .row2{ display:flex; align-items:center;}
.row1{ height:26px;}
.row2{ height:28px;}
.qat{ display:flex; padding-left:6px;}
.qat button{ width:30px; height:26px;}
.qat .narrow{ width:15px;}
.combo{ display:flex; align-items:center; min-width:0; height:27px; padding-right:6px; background:#f2f2f2; border:1px solid #aaa; border-radius:3px;}
.combo select{ flex:1; min-width:0; width:0; height:100%; padding-left:18px; border:0; background:none; appearance:none; outline:0; font:inherit; font-size:16px; color:#6c6c6c;}
.space{ width:226px; height:26px; margin-left:4px; padding-left:3px; background:linear-gradient(#dcdcdc,#b4b4b4); border-color:#555; border-radius:0;}
.space select{ padding-left:1px;}
.more{ width:20px;}
.row1 h1{ flex:1; display:flex; justify-content:center; gap:18px; padding-right:20px; font-size:16px; font-weight:400; color:#eee; white-space:nowrap;}
.winbtns{ display:flex; gap:1px; margin-left:auto;}
.winbtns button{ width:20px; height:20px;}
.winbtns svg{ fill:none; stroke:#2c2c2c;}
.menu{ display:flex; gap:29px; padding:6px 0 0 16px; color:#eee; font-size:16px; line-height:22px; white-space:nowrap;}
.row2 .winbtns{ padding-top:6px;}

/* toolbars */
.bar{ display:flex; height:29px; flex:none; margin-right:-4px; background:#e9e9e9; border-top:1px solid #444;}
.bar.second{ margin-top:6px;}
.grip{ width:11px; flex:none; border:3px solid #4c4c4c; background:repeating-linear-gradient(#4c4c4c 0 1px,#888 1px 2px);}
.grip.h{ width:auto; height:11px; border-right-width:13px;}
.tools{ display:flex; align-items:center; background:#e9e9e9;}
.tools button{ width:29px; height:28px; flex:none;}
.tools .narrow{ width:17px;}
.sep{ width:7px; height:24px; flex:none; background:linear-gradient(90deg,transparent 3px,#222 3px 5px,transparent 5px);}
.help{ padding-left:2px;}
.help span{ width:20px; height:21px; border:2px solid #444; background:#f4f4f4; font:bold 15px/17px "Noto Sans",sans-serif; color:#333; text-align:center;}
.fill{ flex:1; min-width:0; padding-right:2px;}
.fill .combo{ flex:1;}
.fill .mid{ padding-left:24px;}
.fill select{ padding-left:6px;}
.ws{ width:221px; margin-left:1px; border-color:#eee #aaa #eee #eee;}
.ws select{ padding-left:9px;}
.second .grip{ margin-left:1px;}
.second .grip:first-child{ margin-left:0;}
.layers{ flex:492; min-width:0;}
.grow{ flex:1; gap:1px; padding-left:4px;}
.grow select{ padding-left:4px;}
.props{ flex:575; min-width:0; gap:1px; padding-right:7px;}
.props select{ padding-left:3px; font-family:"Liberation Serif",serif; color:#444;}
.c1{ flex:187; padding-left:5px;}
.c2{ flex:200; padding-left:5px;}
.c3{ flex:156; padding-left:5px;}
.swatch{ width:13px; height:13px; flex:none; margin:0 2px; border:2px solid #222; background:#fff;}
.line{ width:76px; height:2px; margin-right:3px; flex:none; background:#333;}
.line.short{ width:44px;}

/* work area */
.work{ flex:1; min-height:0; display:flex; gap:6px; padding-top:6px;}
.side{ width:31px; flex:none;}
.vtools{ display:flex; flex-direction:column; background:#ececec; border:1px solid #444; border-top:0;}
.vtools button{ flex:1; width:100%; min-height:0;}
.draw{ height:554px;}
.modify{ height:498px;}
.order{ height:174px;}
.order hr{ border:0; height:1px; margin:3px; background:#aaa;}
.modify + .grip{ height:13px;}
.letter{ font-size:25px; font-weight:500; line-height:24px;}
.doc{ flex:1; min-width:0; display:flex; flex-direction:column; margin-bottom:5px; border:1px solid #ccc; border-width:2px 2px 1px 1px; background:#ececec;}
.view{ flex:1; min-height:0; display:flex;}
.canvas{ flex:1; min-width:0; position:relative; background:#000; overflow:hidden;}
.drawing{ display:block;}
.drawing text{ font:300 23px Lato,sans-serif; fill:#ddd;}
.web{ stroke:#dcdc62; stroke-width:1.3;}
.webblue{ stroke:#15158c; stroke-width:1.5;}
.chord{ stroke:#c030c0; stroke-width:1.8;}
.low{ stroke:#a01ca0; stroke-width:1.6;}
.hi{ stroke:#e8a8e8; stroke-width:1; stroke-dasharray:9 5 20 4;}
.viewlabel{ position:absolute; left:6px; top:4px; color:#ddd; font-size:16px; line-height:22px;}
.cube{ position:absolute; right:14px; top:63px; width:160px; display:flex; flex-direction:column; align-items:center;}
.cube b{ width:58px; height:58px; background:#a6a6a6; font:36px/54px "Noto Serif CJK SC","Noto Sans CJK SC",serif; font-weight:300; color:#484848; text-align:center;}
.cube svg{ margin-top:-6px;}
.cube button{ width:73px; height:22px; margin-top:55px; gap:5px; background:#8d969b; border:1px solid #6c7478; border-radius:5px; color:#566068; font-size:14px; line-height:18px;}
.cube button i{ width:12px; height:2px; background:#a8c0cc;}
.tip{ position:absolute; left:594px; top:601px; width:176px; height:26px; padding-left:3px; background:#989898; border:1px solid #b4b4b4; color:#111; font-size:16px; line-height:23px; white-space:nowrap;}
.vscroll{ width:22px; flex:none; display:flex; flex-direction:column; align-items:center; padding:8px 0 7px; background:linear-gradient(90deg,#e2e2e2,#f2f2f2);}
.thumb{ width:18px; height:19px; flex:none; border:1px solid #888; border-radius:2px; background:linear-gradient(#f4f4f4,#c0c0c0);}
.vscroll .thumb{ margin:315px 0 auto;}
.tabs{ height:21px; flex:none; display:flex; border-top:1px solid #aaa;}
.nav{ display:flex;}
.nav button{ width:18px; border-right:1px solid #aaa; border-bottom:1px solid #aaa;}
.nav svg{ fill:#666;}
.tab{ width:58px; font-size:15px; line-height:18px; color:#111; background:linear-gradient(108deg,transparent 54px,#777 54px 55px,transparent 55px);}
.tab.on{ width:59px; margin-right:-6px; background:#000; color:#fff; clip-path:polygon(0 0,100% 0,calc(100% - 7px) 100%,7px 100%);}
.hscroll{ flex:0 0 458px; display:flex; align-items:center; margin-left:auto; padding-right:30px; background:#e6e6e6;}
.split{ width:6px; height:17px; margin-right:9px; border:1px solid #999; border-radius:2px; background:#f8f8f8;}
.hscroll .thumb{ margin:0 39px 0 auto; height:17px;}

/* command line */
.command{ display:flex; height:73px; flex:none; margin-right:-3px;}
.cgrip{ width:20px; background:#989898; border-radius:4px 0 0 0; background-image:repeating-linear-gradient(90deg,#444 0 1px,transparent 1px 3px); background-size:14px 4px; background-repeat:no-repeat; background-position:3px 4px;}
.cbody{ flex:1; background:#c4c4c4; font-family:"Liberation Mono","Noto Sans CJK SC",monospace; font-size:16px; color:#222;}
.cbody pre{ height:51px; padding:1px 0 0 2px; font:inherit; line-height:20px;}
.prompt{ display:flex; height:22px; padding-left:2px; background:#f7f7f7; border-top:1px solid #999;}
.prompt label{ line-height:26px; white-space:pre;}
.prompt input{ flex:1; border:0; outline:0; background:none; font:inherit;}

/* status bar */
.status{ display:flex; height:29px; flex:none; margin-right:-4px; border-top:1px solid #111; background:linear-gradient(#929292,#6c6c6c);}
.coords{ width:290px; flex:none; padding-left:14px; font:13px/32px "Liberation Mono",monospace; color:#111; white-space:nowrap;}
.toggles{ display:flex; width:388px; flex:none;}
.toggles button{ flex:1; border-right:1px solid #555; background:linear-gradient(#b4b4b4,#8e8e8e);}
.toggles .on{ background:linear-gradient(#dceff2,#b4dce2 50%,#8cc4cc 50%,#b4e0e4);}
.toggles .half{ background:#a8b8c0;}
.rest{ display:flex; margin-left:auto;}
.rest button{ width:28px; flex:none; border-right:1px solid #606060; background:linear-gradient(#b4b4b4,#8e8e8e);}
.rest .model{ width:37px; color:#111;}
.rest .gapl{ margin-left:24px;}
.rest .gaps{ margin-left:8px;}
.rest .anno{ width:67px; gap:3px; font:13px "Liberation Mono",monospace; color:#111;}
.rest .anno .arr{ border-width:6px 5px 0;}
.rest .iso{ width:41px; background:linear-gradient(#8a8a8a,#a4a4a4); border:0; box-shadow:inset 0 0 0 2px #777;}
.rest .small{ width:14px; margin-left:2px;}
.size{ margin:10px 0 0 5px;}
```
